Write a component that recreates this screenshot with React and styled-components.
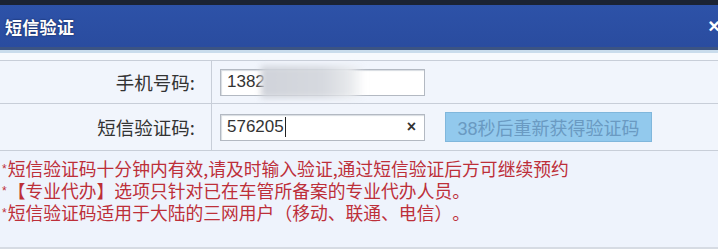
import React from "react";
import styled, { createGlobalStyle } from "styled-components";

const Global = createGlobalStyle`
  html, body { margin: 0; padding: 0; background: #eef3fc; }
  body { width: 718px; height: 249px; overflow: hidden; font-family: "Noto Sans CJK SC", "Liberation Sans", sans-serif; text-spacing-trim: space-all; }
`;

const Dialog = styled.div`
  width: 718px;
  height: 249px;
  display: flex;
  flex-direction: column;
  background: #eef3fc;
  box-sizing: border-box;
  border-bottom: 2px solid #d6dbe3;
`;

const TopStrip = styled.div`
  height: 5px;
  background: #1b2333;
`;

const TitleBar = styled.div`
  height: 42px;
  display: flex;
  align-items: center;
  justify-content: space-between;
  background: linear-gradient(#2d52a8, #2a4c9f);
  padding-left: 5px;
  box-sizing: border-box;
`;

const Title = styled.div`
  color: #ffffff;
  font-size: 17px;
  font-weight: 700;
  letter-spacing: 0.3px;
  text-shadow: 0 0 2px #10204a;
`;

const Close = styled.div`
  color: #ffffff;
  font-family: "Liberation Sans", sans-serif;
  font-size: 20px;
  font-weight: 700;
  margin-right: -2px;
`;

const TitleEdge = styled.div`
  height: 3px;
  background: #3c5483;
`;

const TitleGlow = styled.div`
  height: 3px;
  background: #c9dcec;
`;

const Spacer = styled.div`
  height: 7px;
  background: #f6f9fd;
`;

const Form = styled.div`
  display: grid;
  grid-template-columns: 212px 1fr;
  border-top: 1px solid #c8ced8;
  border-bottom: 1px solid #c8ced8;
  background: #f1f5fc;
`;

const Label = styled.div`
  height: ${(p) => p.$h}px;
  display: flex;
  align-items: center;
  justify-content: flex-end;
  padding-right: 16px;
  font-size: 18.5px;
  color: #333333;
  border-right: 1px solid #c8ced8;
  border-bottom: ${(p) => (p.$last ? "none" : "1px solid #c8ced8")};
  box-sizing: border-box;
`;

const Value = styled.div`
  height: ${(p) => p.$h}px;
  display: flex;
  align-items: center;
  gap: 20px;
  padding-left: 8px;
  border-bottom: ${(p) => (p.$last ? "none" : "1px solid #c8ced8")};
  box-sizing: border-box;
`;

const InputBox = styled.div`
  position: relative;
  width: 205px;
  height: 27px;
  box-sizing: border-box;
  background: #ffffff;
  border: 1px solid #b3b9c2;
  box-shadow: inset 1px 1px 1px #d8dce2;
  display: flex;
  align-items: center;
  padding: 0 6px;
  font-family: "Liberation Sans", sans-serif;
  font-size: 17px;
  color: #333333;
`;

const Caret = styled.span`
  display: inline-block;
  width: 1px;
  height: 20px;
  background: #222;
  margin-left: 1px;
`;

const Blur = styled.div`
  position: absolute;
  left: 40px;
  top: -4px;
  width: 104px;
  height: 32px;
  background: linear-gradient(90deg, #d0d3da, #d6d9df 60%, #e7e9ec 85%, rgba(255,255,255,0));
  filter: blur(3px);
`;

const Clear = styled.span`
  margin-left: auto;
  font-size: 16px;
  font-weight: 700;
  color: #333;
  margin-right: 2px;
`;

const ResendButton = styled.div`
  width: 207px;
  height: 30px;
  box-sizing: border-box;
  background: #92c9ed;
  border: 1px solid #80b7dc;
  display: flex;
  align-items: center;
  justify-content: center;
  color: #6a9ac2;
  font-size: 18px;
  font-family: "Liberation Sans", "Noto Sans CJK SC", sans-serif;
`;

const Notes = styled.div`
  padding: 6px 0 0 2px;
  color: #bd2f39;
  font-size: 17.8px;
  line-height: 22px;
  white-space: nowrap;
`;

const NoteLine = styled.div`
  height: 22px;
`;

const Star = styled.span`
  font-family: "Liberation Sans", sans-serif;
  font-size: 12px;
  vertical-align: 3px;
  margin-right: 1px;
`;

export default function App() {
  return (
    <>
      <Global />
      <Dialog>
        <TopStrip />
        <TitleBar>
          <Title>短信验证</Title>
          <Close>×</Close>
        </TitleBar>
        <TitleEdge />
        <TitleGlow />
        <Spacer />
        <Form>
          <Label $h={43}>手机号码:</Label>
          <Value $h={43}>
            <InputBox>
              1382
              <Blur />
            </InputBox>
          </Value>
          <Label $h={46} $last>短信验证码:</Label>
          <Value $h={46} $last>
            <InputBox>
              576205<Caret />
              <Clear>×</Clear>
            </InputBox>
            <ResendButton>38秒后重新获得验证码</ResendButton>
          </Value>
        </Form>
        <Notes>
          <NoteLine><Star>*</Star>短信验证码十分钟内有效,请及时输入验证,通过短信验证后方可继续预约</NoteLine>
          <NoteLine><Star>*</Star>【专业代办】选项只针对已在车管所备案的专业代办人员。</NoteLine>
          <NoteLine><Star>*</Star>短信验证码适用于大陆的三网用户（移动、联通、电信）。</NoteLine>
        </Notes>
      </Dialog>
    </>
  );
}
